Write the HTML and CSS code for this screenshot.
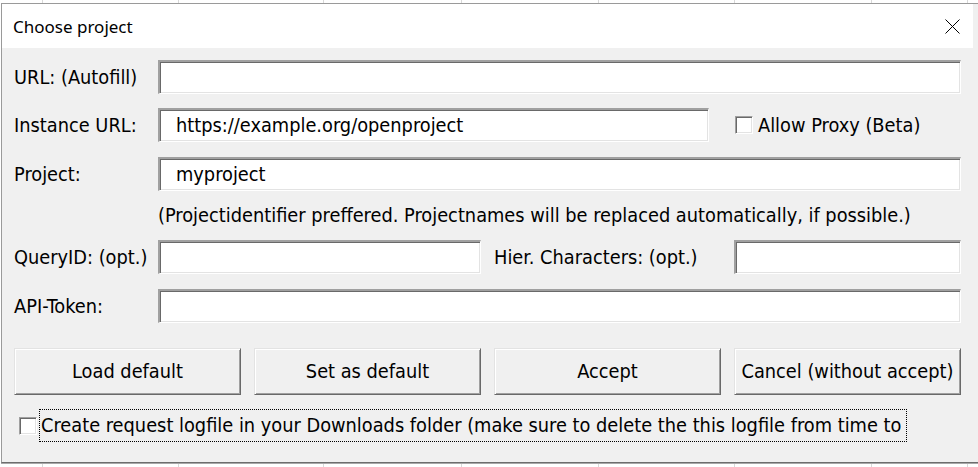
FILE: index.html
```html
<!DOCTYPE html>
<html lang="en">
<head>
<meta charset="utf-8">
<title>Choose project</title>
<link rel="stylesheet" href="styles.css">
</head>
<body>
<div class="window">
  <div class="titlebar">
    <span class="title">Choose project</span>
    <svg class="close" width="15" height="15" viewBox="0 0 15 15" aria-hidden="true">
      <path d="M0.5 0.5 L14.5 14.5 M14.5 0.5 L0.5 14.5" stroke="#000" stroke-width="1" fill="none"/>
    </svg>
  </div>
  <div class="client">
    <div class="row first">
      <span class="lbl">URL: (Autofill)</span>
      <div class="field f-full"></div>
    </div>
    <div class="row gap14">
      <span class="lbl">Instance URL:</span>
      <div class="field f-inst">https://example.org/openproject</div>
      <div class="opt">
        <span class="chk"></span>
        <span class="opt-text">Allow Proxy (Beta)</span>
      </div>
    </div>
    <div class="row gap15">
      <span class="lbl">Project:</span>
      <div class="field f-full">myproject</div>
    </div>
    <div class="hint">(Projectidentifier preffered. Projectnames will be replaced automatically, if possible.)</div>
    <div class="row">
      <span class="lbl">QueryID: (opt.)</span>
      <div class="field f-query"></div>
      <span class="lbl lbl-hier">Hier. Characters: (opt.)</span>
      <div class="field f-hier"></div>
    </div>
    <div class="row gap15">
      <span class="lbl">API-Token:</span>
      <div class="field f-full"></div>
    </div>
    <div class="buttons">
      <button class="btn" type="button">Load default</button>
      <button class="btn" type="button">Set as default</button>
      <button class="btn" type="button">Accept</button>
      <button class="btn" type="button">Cancel (without accept)</button>
    </div>
    <div class="logrow">
      <span class="chk"></span>
      <span class="focus">Create request logfile in your Downloads folder (make sure to delete the this logfile from time to</span>
    </div>
  </div>
</div>
</body>
</html>
```

FILE: styles.css
```css
html, body {
  margin: 0;
  padding: 0;
  height: 100%;
  overflow: hidden;
}

body {
  background-color: #ffffff;
  background-image: linear-gradient(90deg,
    #fff 0 42px, #d9d9d9 42px 43px,
    #fff 43px 178px, #d9d9d9 178px 179px,
    #fff 179px 323px, #d9d9d9 323px 324px,
    #fff 324px 461px, #d9d9d9 461px 462px,
    #fff 462px 598px, #d9d9d9 598px 599px,
    #fff 599px 734px, #d9d9d9 734px 735px,
    #fff 735px 871px, #d9d9d9 871px 872px,
    #fff 872px 967px, #d9d9d9 967px 968px,
    #fff 968px);
  font-family: "DejaVu Sans Condensed", "DejaVu Sans", sans-serif;
  color: #000;
}

.window {
  margin: 3px 0 0 1px;
  width: 1000px;
  border: 1px solid #9a9a9a;
  border-bottom: 1px solid #6d6d6d;
  box-shadow: 0 1px 0 #a8a8a8;
  background: #f0f0f0;
}

.titlebar {
  height: 44px;
  background: #fff;
  display: flex;
  align-items: center;
  justify-content: space-between;
  box-sizing: border-box;
  width: 971px;
  padding: 0 13px 0 11px;
}

.title {
  font-family: "Noto Sans", "Open Sans", sans-serif;
  font-size: 17px;
  color: #000;
}

.close {
  display: block;
}

.client {
  height: 414px;
  box-sizing: border-box;
  padding: 12px 0 0 12px;
  font-size: 19.8px;
}

.row {
  display: flex;
  align-items: center;
  height: 34px;
}

.row.gap14 { margin-top: 14px; }
.row.gap15 { margin-top: 15px; }

.lbl {
  width: 144px;
  flex: none;
  white-space: nowrap;
}

.lbl-hier {
  width: 240px;
  margin-left: 13px;
}

.field {
  box-sizing: border-box;
  height: 34px;
  flex: none;
  background: #fff;
  border-style: solid;
  border-width: 2px 1px 1px 2px;
  border-color: #a0a0a0 #fff #fff #a0a0a0;
  box-shadow: inset 1px 1px 0 #696969, inset -1px -1px 0 #e3e3e3;
  padding-left: 16px;
  display: flex;
  align-items: center;
  white-space: nowrap;
}

.f-full { width: 803px; }
.f-inst { width: 551px; }
.f-query { width: 323px; }
.f-hier { width: 227px; }

.opt {
  display: flex;
  align-items: center;
  margin-left: 26px;
}

.chk {
  box-sizing: border-box;
  width: 18px;
  height: 18px;
  flex: none;
  background: #fff;
  border: 1px solid;
  border-color: #a0a0a0 #fff #fff #a0a0a0;
  box-shadow: inset 1px 1px 0 #696969, inset -1px -1px 0 #e3e3e3;
}

.opt-text {
  margin-left: 5px;
  white-space: nowrap;
}

.hint {
  height: 49px;
  display: flex;
  align-items: center;
  padding-left: 144px;
  white-space: nowrap;
}

.buttons {
  display: flex;
  gap: 13px;
  margin-top: 25px;
}

.btn {
  box-sizing: border-box;
  width: 227px;
  height: 47px;
  padding: 0;
  margin: 0;
  font: inherit;
  color: #000;
  background: #f0f0f0;
  border: 1px solid;
  border-color: #e3e3e3 #696969 #696969 #e3e3e3;
  box-shadow: inset 1px 1px 0 #fff, inset -1px -1px 0 #a0a0a0;
  white-space: nowrap;
}

.logrow {
  display: flex;
  align-items: center;
  margin-top: 14px;
  height: 33px;
}

.logrow .chk {
  margin-left: 5px;
}

.focus {
  box-sizing: border-box;
  margin-left: 2px;
  width: 868px;
  height: 33px;
  border: 1px dotted #000;
  padding-left: 1px;
  display: flex;
  align-items: center;
  white-space: nowrap;
  overflow: hidden;
}
```
